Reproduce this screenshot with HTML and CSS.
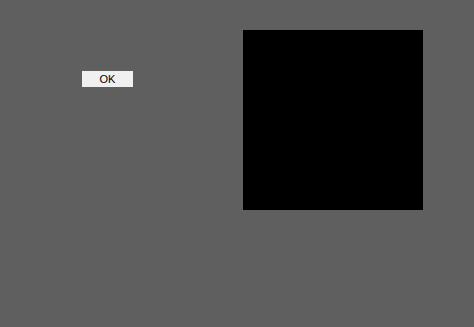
FILE: index.html
```html
<!DOCTYPE html>
<html>
<head>
<meta charset="utf-8">
<link rel="stylesheet" href="styles.css">
</head>
<body>
<div class="stage">
  <button class="ok-btn">OK</button>
  <div class="canvas"></div>
</div>
</body>
</html>
```

FILE: styles.css
```css
html, body {
  margin: 0;
  padding: 0;
  background: #5f5f5f;
  width: 474px;
  height: 327px;
  overflow: hidden;
}
.stage {
  display: flex;
  align-items: flex-start;
  padding-top: 30px;
}
.ok-btn {
  margin: 41px 0 0 82px;
  width: 51px;
  height: 16px;
  padding: 0;
  border: none;
  background: #f0f0f0;
  color: #000;
  font-family: "Liberation Sans", Arial, sans-serif;
  font-size: 11px;
  line-height: 16px;
}
.canvas {
  margin-left: 110px;
  width: 180px;
  height: 180px;
  background: #000;
}
```
